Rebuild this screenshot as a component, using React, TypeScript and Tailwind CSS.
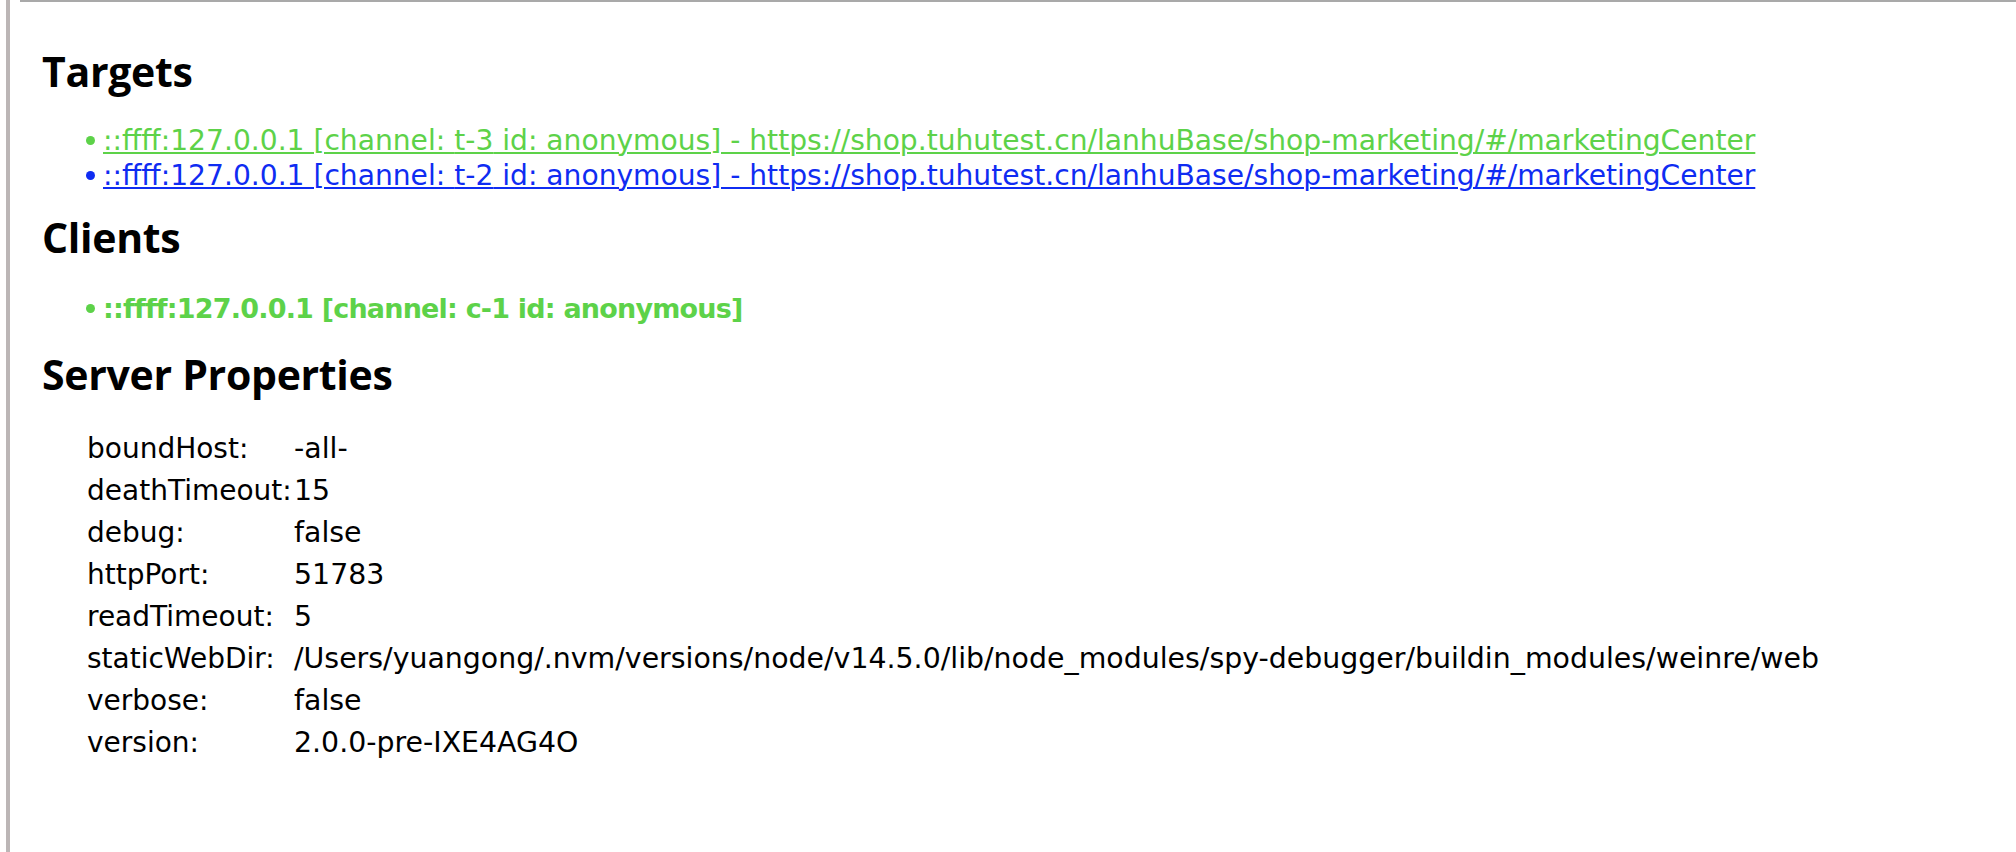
const green = "#5dd249";

const targets = [
  { channel: "t-3", text: "text-[#5dd249] decoration-[#5dd249]", dot: "bg-[#5dd249]" },
  { channel: "t-2", text: "text-[#0f2cf2] decoration-[#0f2cf2]", dot: "bg-[#0f2cf2]" },
];

const serverProps: [string, string][] = [
  ["boundHost:", "-all-"],
  ["deathTimeout:", "15"],
  ["debug:", "false"],
  ["httpPort:", "51783"],
  ["readTimeout:", "5"],
  ["staticWebDir:", "/Users/yuangong/.nvm/versions/node/v14.5.0/lib/node_modules/spy-debugger/buildin_modules/weinre/web"],
  ["verbose:", "false"],
  ["version:", "2.0.0-pre-IXE4AG4O"],
];

function Heading({ children }: { children: string }) {
  return (
    <h2 className="[font-family:'Open_Sans',sans-serif] text-[41px] font-bold leading-[50px] tracking-[-0.3px] text-black">
      {children}
    </h2>
  );
}

export default function App() {
  return (
    <div className="flex h-[852px] w-full bg-white pl-[6px] [font-family:'DejaVu_Sans',sans-serif] text-[28px] text-black">
      <div className="flex flex-1 flex-col border-l-4 border-[#bcb6b6]">
        {/* top rule */}
        <div className="ml-[10px] h-[2px] flex-none bg-[#a9a9a9]" />

        <div className="flex flex-col pl-[32px] pt-[44px]">
          <Heading>Targets</Heading>
          <ul className="mt-[27px] mb-[19px]">
            {targets.map((t) => (
              <li key={t.channel} className="flex h-[35px] items-center leading-[35px]">
                <span className={`ml-[44px] h-[9px] w-[9px] flex-none rounded-full ${t.dot}`} />
                <a
                  href="#"
                  className={`ml-[8px] whitespace-nowrap text-[28.15px] underline decoration-2 underline-offset-2 ${t.text}`}
                >
                  ::ffff:127.0.0.1 [channel: {t.channel} id: anonymous] - https://shop.tuhutest.cn/lanhuBase/shop-marketing/#/marketingCenter
                </a>
              </li>
            ))}
          </ul>

          <Heading>Clients</Heading>
          <ul className="mt-[29px] mb-[23px]">
            <li className="flex h-[35px] items-center leading-[35px]">
              <span className="ml-[44px] h-[9px] w-[9px] flex-none rounded-full bg-[#5dd249]" />
              <span
                className="ml-[8px] whitespace-nowrap text-[27px] font-bold tracking-[-0.8px]"
                style={{ color: green }}
              >
                ::ffff:127.0.0.1 [channel: c-1 id: anonymous]
              </span>
            </li>
          </ul>

          <Heading>Server Properties</Heading>
          <div className="mt-[29px] ml-[45px] grid grid-cols-[207px_auto] justify-start">
            {serverProps.map(([k, v]) => (
              <div key={k} className="contents">
                <div className="h-[42px] whitespace-nowrap leading-[42px]">{k}</div>
                <div className="h-[42px] whitespace-nowrap text-[28.4px] leading-[42px]">{v}</div>
              </div>
            ))}
          </div>
        </div>
      </div>
    </div>
  );
}
